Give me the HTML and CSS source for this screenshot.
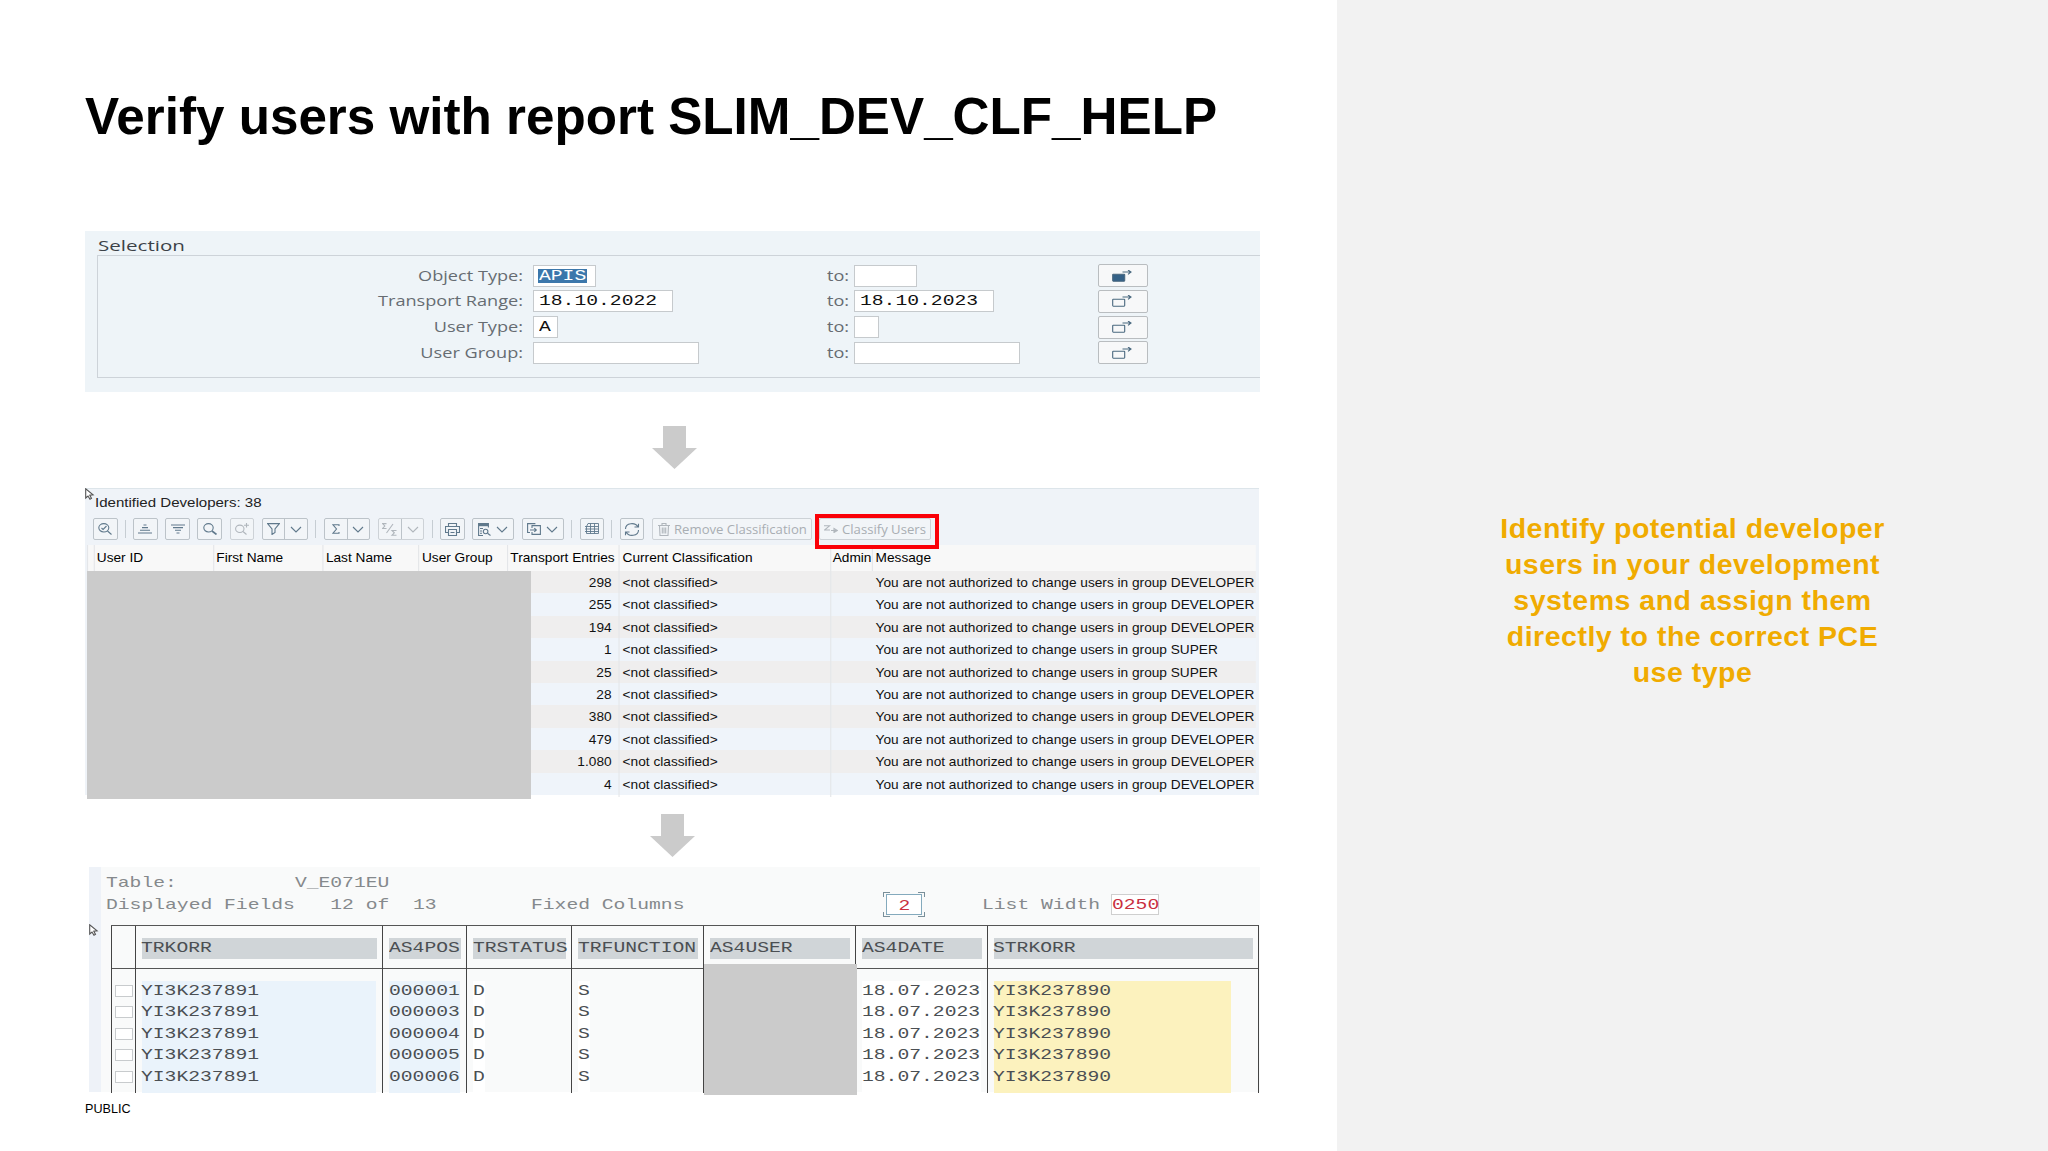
FILE: index.html
```html
<!DOCTYPE html>
<html lang="en">
<head>
<meta charset="UTF-8">
<meta name="viewport" content="width=device-width, initial-scale=1.0">
<title>Verify users with report SLIM_DEV_CLF_HELP</title>
<link rel="stylesheet" href="styles.css">
</head>
<body>

<!-- shared icons -->
<svg class="defs" width="0" height="0">
    <symbol id="i-down" viewBox="0 0 12 7"><path d="M1 1l5 5 5-5"/></symbol>
    <symbol id="i-more" viewBox="0 0 20 12"><rect x=".7" y="4.2" width="12" height="7" rx=".6"/><path d="M10.500 2h8.500M16 0l3 2-3 2.400" fill="none"/></symbol>
    <symbol id="i-cursor" viewBox="0 0 10 12"><path d="M.7.8v9.200l2.300-2 2 3.200 1.500-.8-1.700-3.100 3.300-.4z"/></symbol>
    <symbol id="i-arrow" viewBox="0 0 45 43"><path d="M11 0h23v22h11L22.500 43 0 22h11z"/></symbol>
</svg>

<div class="slide">
    <main class="main">
        <h1>Verify users with report SLIM_DEV_CLF_HELP</h1>

        <section class="selection">
            <div class="legend"><span class="wide">Selection</span></div>
            <div class="fields">
                <div class="field">
                    <label class="wide-r">Object Type:</label>
                    <div class="input w4"><mark><span class="mono">APIS</span></mark></div>
                    <span class="wide to">to:</span>
                    <div class="input w4"></div>
                    <div class="more filled"><svg><use href="#i-more"/></svg></div>
                </div>
                <div class="field">
                    <label class="wide-r">Transport Range:</label>
                    <div class="input w10"><span class="mono">18.10.2022</span></div>
                    <span class="wide to">to:</span>
                    <div class="input w10"><span class="mono">18.10.2023</span></div>
                    <div class="more"><svg><use href="#i-more"/></svg></div>
                </div>
                <div class="field">
                    <label class="wide-r">User Type:</label>
                    <div class="input w1"><span class="mono">A</span></div>
                    <span class="wide to">to:</span>
                    <div class="input w1"></div>
                    <div class="more"><svg><use href="#i-more"/></svg></div>
                </div>
                <div class="field">
                    <label class="wide-r">User Group:</label>
                    <div class="input w12"></div>
                    <span class="wide to">to:</span>
                    <div class="input w12"></div>
                    <div class="more"><svg><use href="#i-more"/></svg></div>
                </div>
            </div>
        </section>

        <svg class="arrow first"><use href="#i-arrow"/></svg>

        <section class="alv">
            <svg class="cursor"><use href="#i-cursor"/></svg>
            <div class="alv-title"><span>Identified Developers: 38</span></div>
            <div class="toolbar">
                <div class="btn"><svg width="14" height="12" viewBox="0 0 14 12"><ellipse cx="5.800" cy="4.800" rx="5" ry="4.200"/><path d="M3.500 5l1.600 1.500L8.500 3M9.500 8l4 3.500"/></svg></div>
                <i class="sep"></i>
                <div class="btn"><svg width="14" height="10" viewBox="0 0 14 10"><path d="M5.500 1h3M4 3.600h6M2 6.300h10M0 9h14"/></svg></div>
                <div class="btn"><svg width="14" height="10" viewBox="0 0 14 10"><path d="M0 1h14M2 3.600h10M4 6.300h6M5.500 9h3"/></svg></div>
                <div class="btn"><svg width="14" height="12" viewBox="0 0 14 12"><ellipse cx="5.500" cy="4.800" rx="4.700" ry="4.200"/><path d="M9 8l4.500 3.500" stroke-width="1.600"/></svg></div>
                <div class="btn off"><svg width="14" height="12" viewBox="0 0 14 12"><ellipse cx="4.800" cy="5.800" rx="4.200" ry="3.700"/><path d="M8 8.500l3.500 3M9 2.200h5M11.500 0v4.500"/></svg></div>
                <div class="btn split"><div><svg width="13" height="12" viewBox="0 0 13 12"><path d="M.6.600h11.800L8 6v3.500l-3 2V6z"/></svg></div><div><svg width="12" height="7"><use href="#i-down"/></svg></div></div>
                <i class="sep"></i>
                <div class="btn split"><div><svg width="8" height="10" viewBox="0 0 8 10"><path d="M7 2V.700H.8L4.500 5 .8 9.300H7V8"/></svg></div><div><svg width="12" height="7"><use href="#i-down"/></svg></div></div>
                <div class="btn split off"><div><svg width="15" height="13" viewBox="0 0 15 13"><path d="M4.500.600H.6L2.800 3 .6 5.500h3.900M11 1L4.500 10M14.500 7.500H10l2.300 2.300L10 12.300h4.500"/></svg></div><div><svg width="12" height="7"><use href="#i-down"/></svg></div></div>
                <i class="sep"></i>
                <div class="btn"><svg width="15" height="13" viewBox="0 0 15 13"><path d="M3.500 3.500v-3h8v3M3.500 9.500h-3v-6h14v6h-3M3.500 6.500h8v6h-8zM5.500 9.500h4"/></svg></div>
                <div class="btn w42"><svg width="13" height="13" viewBox="0 0 13 13"><path d="M5 12.500H.6V.600h9.800v4M2 5.500h3M2 8h2M2 10.300h2"/><path d="M.6 2h9.800" stroke-width="2.400"/><ellipse cx="7.600" cy="8.500" rx="2.300" ry="2.200"/><path d="M9.500 10.300l3 2.200"/></svg><svg width="12" height="7"><use href="#i-down"/></svg></div>
                <div class="btn w42"><svg width="14" height="12" viewBox="0 0 14 12"><path d="M3 9.500H.6V.600h7.800M5 5V2.600h8.400v8.800H5V9M3 7h6M7.300 5.200L9.300 7l-2 1.800"/></svg><svg width="12" height="7"><use href="#i-down"/></svg></div>
                <i class="sep"></i>
                <div class="btn"><svg width="14" height="12" viewBox="0 0 14 12"><path d="M1.500 3.500l1.500-3h10.500v10h-12M0 3.500h13.500M0 6h13.500M0 8.500h13.500M1.500 3.500v7M5.500.500v10M9.500.500v10" stroke-width=".9"/></svg></div>
                <i class="sep"></i>
                <div class="btn"><svg width="16" height="13" viewBox="0 0 16 13"><path d="M1.500 6c0-6.500 10-7 12.500-2M14.500.800V4h-4M14.500 7c0 6.500-10 7-12.500 2M1.500 12.200V9h4"/></svg></div>
                <div class="btn off text remove"><svg width="12" height="13" viewBox="0 0 12 13"><path d="M0 2.500h12M4 2.500v-2h4v2M1.500 2.500l.5 10h8l.5-10M4.300 4.500v6M6 4.500v6M7.700 4.500v6"/></svg><span>Remove Classification</span></div>
                <div class="btn off text classify"><svg width="14" height="8" viewBox="0 0 14 8"><path d="M0 .800h5.500L.5 5H6M7 5.500h6M10 3.500v4l3.500-2z"/></svg><span>Classify Users</span></div>
            </div>
            <div class="grid">
                <div class="row head">
                    <b></b><b>User ID</b><b>First Name</b><b>Last Name</b><b>User Group</b><b>Transport Entries</b><b>Current Classification</b><b>Admin</b><b>Message</b>
                </div>
                <div class="row"><b class="num">298</b><b>&lt;not classified&gt;</b><b></b><b class="msg">You are not authorized to change users in group DEVELOPER</b></div>
                <div class="row"><b class="num">255</b><b>&lt;not classified&gt;</b><b></b><b class="msg">You are not authorized to change users in group DEVELOPER</b></div>
                <div class="row"><b class="num">194</b><b>&lt;not classified&gt;</b><b></b><b class="msg">You are not authorized to change users in group DEVELOPER</b></div>
                <div class="row"><b class="num">1</b><b>&lt;not classified&gt;</b><b></b><b class="msg">You are not authorized to change users in group SUPER</b></div>
                <div class="row"><b class="num">25</b><b>&lt;not classified&gt;</b><b></b><b class="msg">You are not authorized to change users in group SUPER</b></div>
                <div class="row"><b class="num">28</b><b>&lt;not classified&gt;</b><b></b><b class="msg">You are not authorized to change users in group DEVELOPER</b></div>
                <div class="row"><b class="num">380</b><b>&lt;not classified&gt;</b><b></b><b class="msg">You are not authorized to change users in group DEVELOPER</b></div>
                <div class="row"><b class="num">479</b><b>&lt;not classified&gt;</b><b></b><b class="msg">You are not authorized to change users in group DEVELOPER</b></div>
                <div class="row"><b class="num">1.080</b><b>&lt;not classified&gt;</b><b></b><b class="msg">You are not authorized to change users in group DEVELOPER</b></div>
                <div class="row"><b class="num">4</b><b>&lt;not classified&gt;</b><b></b><b class="msg">You are not authorized to change users in group DEVELOPER</b></div>
                <div class="mask"></div>
            </div>
        </section>

        <svg class="arrow second"><use href="#i-arrow"/></svg>

        <section class="table-view">
            <div class="strip"><svg class="cursor"><use href="#i-cursor"/></svg></div>
            <div class="view">
                <div class="info"><span class="mono">Table:          V_E071EU</span></div>
                <div class="info second-line">
                    <span class="mono fields-label">Displayed Fields   12 of  13        Fixed Columns</span>
                    <div class="focus"><span class="mono">2</span></div>
                    <span class="mono list-label">List Width</span>
                    <div class="width-box"><span class="mono">0250</span></div>
                </div>
                <div class="cols">
                    <div class="col c-check">
                        <div class="th"></div>
                        <div class="td"><i></i><i></i><i></i><i></i><i></i></div>
                    </div>
                    <div class="col c-trkorr">
                        <div class="th"><p><span class="mono">TRKORR</span></p></div>
                        <div class="td blue"><span class="mono">YI3K237891</span><span class="mono">YI3K237891</span><span class="mono">YI3K237891</span><span class="mono">YI3K237891</span><span class="mono">YI3K237891</span></div>
                    </div>
                    <div class="col c-pos">
                        <div class="th"><p><span class="mono">AS4POS</span></p></div>
                        <div class="td blue"><span class="mono">000001</span><span class="mono">000003</span><span class="mono">000004</span><span class="mono">000005</span><span class="mono">000006</span></div>
                    </div>
                    <div class="col c-status">
                        <div class="th"><p><span class="mono">TRSTATUS</span></p></div>
                        <div class="td one"><span class="mono">D</span><span class="mono">D</span><span class="mono">D</span><span class="mono">D</span><span class="mono">D</span></div>
                    </div>
                    <div class="col c-func">
                        <div class="th"><p><span class="mono">TRFUNCTION</span></p></div>
                        <div class="td one"><span class="mono">S</span><span class="mono">S</span><span class="mono">S</span><span class="mono">S</span><span class="mono">S</span></div>
                    </div>
                    <div class="col c-user">
                        <div class="th"><p><span class="mono">AS4USER</span></p></div>
                        <div class="mask"></div>
                    </div>
                    <div class="col c-date">
                        <div class="th"><p><span class="mono">AS4DATE</span></p></div>
                        <div class="td white"><span class="mono">18.07.2023</span><span class="mono">18.07.2023</span><span class="mono">18.07.2023</span><span class="mono">18.07.2023</span><span class="mono">18.07.2023</span></div>
                    </div>
                    <div class="col c-strkorr">
                        <div class="th"><p><span class="mono">STRKORR</span></p></div>
                        <div class="td yellow"><span class="mono">YI3K237890</span><span class="mono">YI3K237890</span><span class="mono">YI3K237890</span><span class="mono">YI3K237890</span><span class="mono">YI3K237890</span></div>
                    </div>
                </div>
            </div>
        </section>

        <footer>PUBLIC</footer>
    </main>

    <aside class="side">
        <p>Identify potential developer<br>users in your development<br>systems and assign them<br>directly to the correct PCE<br>use type</p>
    </aside>
</div>

</body>
</html>
```
FILE: styles.css
```css
* {
    box-sizing: border-box;
}

body {
    margin: 0;
    background: #fff;
    font-family: "Liberation Sans", Arial, sans-serif;
    color: #000;
}

.defs {
    position: absolute;
}

svg {
    display: block;
    flex: none;
    fill: none;
    stroke: #60798c;
    stroke-width: 1.1;
}

.slide {
    display: flex;
    width: 2048px;
    height: 1151px;
    overflow: hidden;
}

.main {
    width: 1337px;
    padding: 87px 0 0 85px;
}

h1 {
    margin: 0 0 84px;
    font-size: 51.2px;
    line-height: 60px;
    white-space: nowrap;
}

/* stretched text */
.wide, .wide-r {
    display: block;
    font-family: "Open Sans", "Noto Sans", sans-serif;
    font-size: 14px;
    font-weight: 500;
    transform: scaleX(1.295);
    transform-origin: left;
    white-space: nowrap;
}

.wide-r {
    transform-origin: right;
    text-align: right;
}

.mono {
    display: block;
    font-family: "Liberation Mono", monospace;
    font-size: 14.4px;
    white-space: pre;
    transform: scaleX(1.367);
    transform-origin: left;
}

/* selection screen */
.selection {
    width: 1175px;
    height: 161px;
    padding-left: 12px;
    background: #eef4f8;
}

.legend {
    height: 24px;
    line-height: 29px;
    color: #3c4248;
}

.legend .wide {
    margin-left: 1px;
    transform: scaleX(1.47);
}

.fields {
    height: 123px;
    padding-top: 8px;
    border: 1px solid #cdd3d9;
    border-right: 0;
}

.field {
    display: grid;
    grid-template-columns: 425px 294px 27px 244px 50px;
    align-items: center;
    height: 22px;
    margin-bottom: 3.8px;
    color: #666c72;
}

.field .input:nth-child(2) {
    margin-left: 10px;
}

.field .wide,
.field .wide-r {
    position: relative;
    top: -.5px;
}

.to {
    margin-left: 10px;
}

.input:nth-child(4) {
    margin-left: 10px;
}

.more {
    margin-left: 10px;
}

.input {
    display: flex;
    align-items: center;
    height: 22px;
    padding-left: 4px;
    background: #fff;
    border: 1px solid #c6cacd;
    color: #111;
}

.w1 { width: 25px; }
.w4 { width: 63px; }
.w10 { width: 140px; }
.w12 { width: 166px; }

.input .mono {
    margin-left: 1px;
}

mark {
    width: 49px;
    height: 14px;
    line-height: 15px;
    background: #3b77ab;
    color: #fff;
}

.more {
    display: flex;
    justify-content: center;
    align-items: center;
    width: 50px;
    height: 23px;
    background: #f7f8f9;
    border: 1px solid #b9bdc0;
    border-radius: 2px;
}

.more svg {
    width: 20px;
    height: 12px;
    margin-right: 3px;
    stroke: #49687f;
}

.filled svg {
    fill: #346187;
}

.arrow {
    width: 45px;
    height: 43px;
    fill: #cbcbcb;
    stroke: none;
}

.arrow.first {
    margin: 33.500px 0 19.500px 567px;
}

.arrow.second {
    margin: 18.500px 0 10.500px 565px;
}

/* developer list */
.alv {
    position: relative;
    width: 1174px;
    height: 307px;
    background: #eff3f8;
    border-top: 1px solid #dde5ea;
}

.cursor {
    position: absolute;
    left: 0;
    top: -1px;
    width: 10px;
    height: 12px;
    fill: #fff;
    stroke: #555;
}

.alv-title {
    height: 29px;
    padding-left: 10px;
    font-size: 13.500px;
    line-height: 27px;
    color: #222;
}

.alv-title span {
    display: inline-block;
    transform: scaleX(1.115);
    transform-origin: left;
}

.toolbar {
    display: flex;
    align-items: center;
    gap: 7.640px;
    height: 22px;
    padding-left: 8px;
}

.btn {
    display: flex;
    justify-content: center;
    align-items: center;
    flex: none;
    width: 24.500px;
    height: 22px;
    border: 1px solid #bcc3c9;
    border-radius: 2px;
    background: #f2f5f8;
}

.sep {
    width: 1px;
    height: 18px;
    margin: 0 -.3px;
    background: #c6cdd3;
}

.split {
    width: 46.500px;
}

.split div {
    display: flex;
    justify-content: center;
    align-items: center;
    flex: 1;
    height: 20px;
}

.split div + div {
    border-left: 1px solid #bcc3c9;
}

.w42 {
    width: 42px;
    gap: 5px;
}

.off {
    border-color: #cdd2d7;
    color: #a9aeb3;
}

.off svg {
    stroke: #b0b6bc;
}

.text {
    justify-content: flex-start;
    padding-left: 5px;
    gap: 4px;
    font-family: "Open Sans", sans-serif;
    font-size: 13px;
}

.text span {
    white-space: nowrap;
    transform: scaleX(1.01);
    transform-origin: left;
}

.remove {
    width: 160px;
}

.classify {
    position: relative;
    z-index: 1;
    width: 112px;
    padding-left: 4px;
}

/* red highlight around the button */
.classify::after {
    content: "";
    position: absolute;
    left: -5px;
    top: -5px;
    width: 116px;
    height: 27px;
    border: 4px solid #fa0008;
}

.grid {
    position: relative;
    width: 1169px;
    margin: 5px 0 0 2px;
}

.row {
    display: grid;
    grid-template-columns: 472.400px 187.400px 37.300px 341px;
    width: 1038.100px;
    height: 22.400px;
    line-height: 24px;
    font-size: 12.150px;
    background: #efeeee;
    color: #111;
    transform: scaleX(1.126);
    transform-origin: left;
}

.row:nth-child(odd) {
    background: #eff4fa;
}

.row b {
    padding-left: 2.300px;
    font-weight: normal;
    white-space: nowrap;
    border-left: 1px solid #e4e6e9;
}

.row .num {
    padding: 0 6.500px 0 0;
    text-align: right;
}

.row .msg {
    border-left-color: transparent;
}

.row.head {
    grid-template-columns: 6.200px 105.400px 97.300px 85.300px 78.500px 99.700px 187.400px 37.300px 341px;
    height: 26px;
    line-height: 27px;
    background: #f8f8f8;
    color: #000;
}

.row.head b:nth-child(2),
.row.head b:nth-child(8) {
    padding-left: 1.500px;
}

.grid .mask {
    position: absolute;
    left: 0;
    top: 26px;
    width: 444px;
    height: 228px;
}

.mask {
    background: #cbcbcb;
}

/* table contents */
.table-view {
    display: flex;
    width: 1171px;
    height: 225px;
    margin-left: 4px;
    background: #f9fafa;
}

.strip {
    position: relative;
    width: 12px;
    background: #eef2f8;
}

.strip .cursor {
    top: 57px;
}

.view {
    flex: 1;
    padding: 5px 0 0 5px;
}

.info {
    display: flex;
    align-items: center;
    height: 21.500px;
    color: #85898c;
}

.second-line {
    height: 22px;
}

.fields-label {
    width: 780px;
}

.focus {
    display: flex;
    justify-content: center;
    align-items: center;
    position: relative;
    width: 36px;
    height: 21px;
    background: #fff;
    border: 1px solid #84aabd;
    color: #c9303f;
}

.focus .mono,
.width-box .mono {
    position: relative;
    top: 1px;
}

.focus .mono {
    transform-origin: center;
}

/* corner brackets of the focused field */
.focus::before,
.focus::after {
    content: "";
    position: absolute;
    top: -3px;
    bottom: -3px;
    width: 6px;
    border: 1px solid #7a8f99;
    clip-path: polygon(0 0, 100% 0, 100% 5px, 0 5px, 0 20px, 100% 20px, 100% 100%, 0 100%);
}

.focus::before {
    left: -4px;
    border-right: 0;
}

.focus::after {
    right: -4px;
    border-left: 0;
}

.list-label {
    width: 129px;
    margin-left: 60px;
}

.width-box {
    width: 48px;
    height: 21px;
    background: #fff;
    border: 1px solid #cfcfcf;
    line-height: 19px;
    color: #c9303f;
}

.cols {
    display: flex;
    width: 1148px;
    height: 168px;
    margin: 9px 0 0 4.500px;
    border-top: 1px solid #555;
    border-right: 1px solid #444;
}

.col {
    flex: none;
    border-left: 1px solid #444;
}

.c-check { width: 24px; }
.c-trkorr { width: 247px; }
.c-pos { width: 84px; }
.c-status { width: 105.500px; }
.c-func { width: 131.500px; }
.c-user { width: 152.500px; }
.c-date { width: 131.500px; }
.c-strkorr { flex: 1; }

.th {
    height: 43px;
    padding: 12px 5px 0 6px;
    border-bottom: 1px solid #555;
}

.th p {
    height: 21px;
    margin: 0;
    background: #d0d5d8;
    line-height: 21px;
    color: #4b4f53;
}

.td {
    height: 112px;
    margin: 12px 5.500px 0 6px;
    line-height: 21.500px;
    color: #4b4f53;
}

.c-trkorr .mono,
.c-strkorr .mono {
    margin-left: -.7px;
}

.c-check .td {
    margin: 11px 3px 0;
}

.c-check i {
    display: block;
    width: 18px;
    height: 12px;
    margin-bottom: 9.500px;
    background: #fff;
    border: 1px solid #c8cbcd;
    position: relative;
    top: 5px;
}

.blue {
    background: #eaf3fb;
}

.one {
    width: 12px;
    background: #fff;
}

.white {
    background: #fff;
}

.yellow {
    width: 237px;
    background: #fcf2be;
}

.c-user .mask {
    position: relative;
    width: 153px;
    height: 131px;
    margin-top: -5px;
}

footer {
    margin-top: 10px;
    font-size: 12.600px;
    line-height: 14px;
}

.side {
    flex: 1;
    padding-top: 509.500px;
    background: #f2f2f2;
    text-align: center;
}

.side p {
    margin: 0;
    font-size: 28.500px;
    font-weight: bold;
    line-height: 36px;
    letter-spacing: .5px;
    color: #f0ab00;
}
```
